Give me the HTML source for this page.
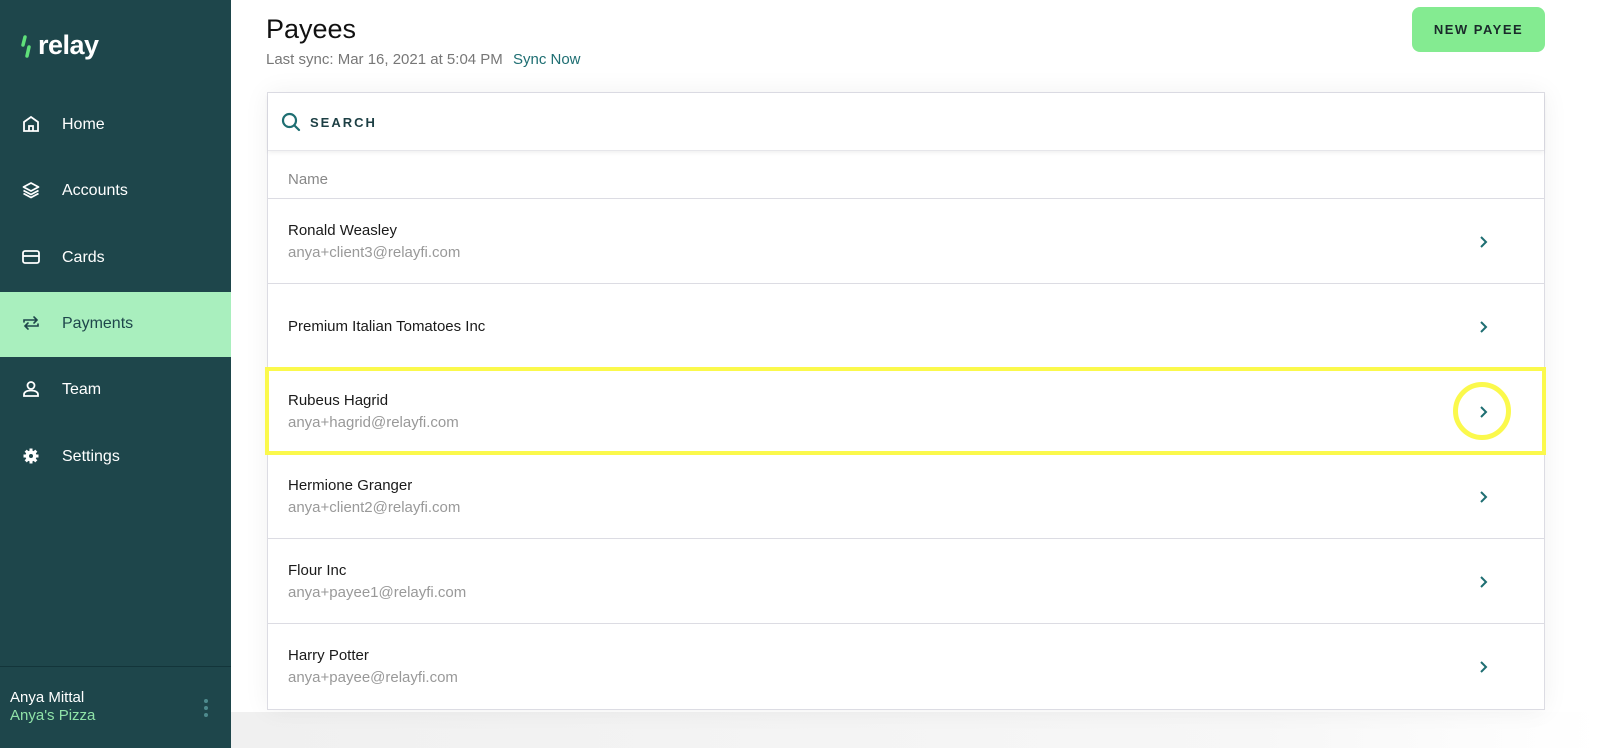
<!DOCTYPE html>
<html><head><meta charset="utf-8"><style>
*{box-sizing:border-box;margin:0;padding:0}
body{width:1600px;height:748px;overflow:hidden;font-family:"Liberation Sans",sans-serif;background:#fff;position:relative}
.sb{position:absolute;left:0;top:0;width:231px;height:748px;background:#1e464b}
.logo{position:absolute;left:20px;top:30px;color:#fff;font-weight:bold;font-size:27px;letter-spacing:-0.5px}
.logo .bolt{position:absolute;left:0;top:5px}
.logo span.t{position:absolute;left:18px;top:0}
.nav{position:absolute;left:0;width:231px;height:65px;color:#fff;font-size:16px}
.nav svg{position:absolute;left:22px;top:22px}
.nav .l{position:absolute;left:62px;top:23px}
.nav.act{background:#a9efbe;color:#1e464b}
.foot{position:absolute;left:0;top:666px;width:231px;border-top:1px solid #13353a;height:82px}
.foot .n{position:absolute;left:10px;top:22px;color:#fff;font-size:15px}
.foot .c{position:absolute;left:10px;top:40px;color:#8fe3a8;font-size:15px}
.dots{position:absolute;left:204px;top:32px}
.dots i{display:block;width:4px;height:4px;border-radius:2px;background:#4e8a8d;margin-bottom:3px}
h1{position:absolute;left:266px;top:14px;font-size:27px;font-weight:normal;color:#111}
.sync{position:absolute;left:266px;top:51px;font-size:15px;color:#777}
.sync a{color:#1e6e72;margin-left:6px}
.btn{position:absolute;left:1412px;top:7px;width:133px;height:45px;background:#84eb91;border-radius:8px;font-size:13px;font-weight:bold;letter-spacing:1.5px;color:#1a2a2a;text-align:center;line-height:45px}
.tbl{position:absolute;left:267px;top:92px;width:1278px;height:618px;border:1px solid #dcdce3;box-shadow:0 0 24px rgba(0,0,0,0.06)}
.search{position:absolute;left:0;top:0;width:1276px;height:58px;border-bottom:1px solid #e6e6ea;box-shadow:0 2px 4px rgba(0,0,0,0.06);background:#fff}
.search svg{position:absolute;left:13px;top:19px}
.search span{position:absolute;left:42px;top:22px;font-size:13px;font-weight:bold;letter-spacing:2px;color:#1d3f44}
.hd{position:absolute;left:0;top:58px;width:1276px;height:48px;border-bottom:1px solid #dcdce3;font-size:15px;color:#888;padding:20px 0 0 20px}
.row{position:absolute;left:0;width:1276px;height:85px;border-bottom:1px solid #dcdce3}
.row .a{position:absolute;left:20px;top:23px;font-size:15px;color:#1a1a1a}
.row .b{position:absolute;left:20px;top:45px;font-size:15px;color:#999}
.row .s{position:absolute;left:20px;top:34px;font-size:15px;color:#1a1a1a}
.row svg{position:absolute;left:1211px;top:36px}
.hl{position:absolute;left:265px;top:367px;width:1281px;height:88px;border:4px solid #fbf94c}
.circ{position:absolute;left:1453px;top:382px;width:58px;height:58px;border:5px solid #fbf94c;border-radius:50%}
.shade{position:absolute;left:231px;top:712px;width:1369px;height:36px;background:linear-gradient(90deg,#f0f0f0,#f7f7f7 75%,#fff)}
</style></head><body>
<div class="sb">
 <div class="logo"><svg class="bolt" width="14" height="24" viewBox="0 0 14 24"><path d="M5 2 L3 10 M9 12 L7 21" stroke="#5fe07a" stroke-width="3.5" fill="none" stroke-linecap="round"/></svg><span class="t">relay</span></div>
 <div class="nav" style="top:93px"><svg width="18" height="18" viewBox="0 0 18 18" fill="none" stroke="#fff" stroke-width="1.8"><path d="M2 16V7l7-5 7 5v9z M7 16v-5h4v5"/></svg><span class="l">Home</span></div>
 <div class="nav" style="top:159px"><svg width="18" height="18" viewBox="0 0 18 18" fill="none" stroke="#fff" stroke-width="1.8" stroke-linejoin="round"><path d="M9 2 1.5 6 9 10 16.5 6z M1.5 9.5 9 13.5 16.5 9.5 M1.5 12.5 9 16.5 16.5 12.5"/></svg><span class="l">Accounts</span></div>
 <div class="nav" style="top:226px"><svg width="18" height="18" viewBox="0 0 18 18" fill="none" stroke="#fff" stroke-width="1.8"><rect x="1" y="3" width="16" height="12" rx="2"/><path d="M1 8h16"/></svg><span class="l">Cards</span></div>
 <div class="nav act" style="top:292px"><svg width="18" height="18" viewBox="0 0 18 18" fill="none" stroke="#1e464b" stroke-width="1.6" stroke-linecap="round"><path d="M2 8V6h13 M12 3l3 3-3 3 M16 10v2H3 M6 15l-3-3 3-3"/></svg><span class="l">Payments</span></div>
 <div class="nav" style="top:358px"><svg width="18" height="18" viewBox="0 0 18 18" fill="none" stroke="#fff" stroke-width="1.8"><circle cx="9" cy="5.5" r="3.5"/><path d="M2 16v-1.5c0-2 2-4 7-4s7 2 7 4V16z"/></svg><span class="l">Team</span></div>
 <div class="nav" style="top:425px"><svg width="18" height="18" viewBox="0 0 18 18"><circle cx="9" cy="9" r="5.5" fill="#fff"/><g stroke="#fff" stroke-width="3"><path d="M9 1.5v15M1.5 9h15M3.7 3.7l10.6 10.6M14.3 3.7 3.7 14.3"/></g><circle cx="9" cy="9" r="2" fill="#1e464b"/></svg><span class="l">Settings</span></div>
 <div class="foot"><div class="n">Anya Mittal</div><div class="c">Anya's Pizza</div><div class="dots"><i></i><i></i><i></i></div></div>
</div>
<h1>Payees</h1>
<div class="sync">Last sync: Mar 16, 2021 at 5:04 PM <a>Sync Now</a></div>
<div class="btn">NEW PAYEE</div>
<div class="shade"></div>
<div class="tbl">
 <div class="search"><svg width="20" height="20" viewBox="0 0 20 20" fill="none" stroke="#1e6e72" stroke-width="2.2"><circle cx="8.5" cy="8.5" r="6.5"/><path d="M13.5 13.5 18 18" stroke-linecap="round"/></svg><span>SEARCH</span></div>
 <div class="hd">Name</div>
 <div class="row" style="top:106px"><div class="a">Ronald Weasley</div><div class="b">anya+client3@relayfi.com</div><svg width="10" height="14" viewBox="0 0 10 14"><path d="M2 2l5 5-5 5" stroke="#1e6e72" stroke-width="2" fill="none"/></svg></div>
 <div class="row" style="top:191px"><div class="s">Premium Italian Tomatoes Inc</div><svg width="10" height="14" viewBox="0 0 10 14"><path d="M2 2l5 5-5 5" stroke="#1e6e72" stroke-width="2" fill="none"/></svg></div>
 <div class="row" style="top:276px"><div class="a">Rubeus Hagrid</div><div class="b">anya+hagrid@relayfi.com</div><svg width="10" height="14" viewBox="0 0 10 14"><path d="M2 2l5 5-5 5" stroke="#1e6e72" stroke-width="2" fill="none"/></svg></div>
 <div class="row" style="top:361px"><div class="a">Hermione Granger</div><div class="b">anya+client2@relayfi.com</div><svg width="10" height="14" viewBox="0 0 10 14"><path d="M2 2l5 5-5 5" stroke="#1e6e72" stroke-width="2" fill="none"/></svg></div>
 <div class="row" style="top:446px"><div class="a">Flour Inc</div><div class="b">anya+payee1@relayfi.com</div><svg width="10" height="14" viewBox="0 0 10 14"><path d="M2 2l5 5-5 5" stroke="#1e6e72" stroke-width="2" fill="none"/></svg></div>
 <div class="row" style="top:531px;border-bottom:none"><div class="a">Harry Potter</div><div class="b">anya+payee@relayfi.com</div><svg width="10" height="14" viewBox="0 0 10 14"><path d="M2 2l5 5-5 5" stroke="#1e6e72" stroke-width="2" fill="none"/></svg></div>
</div>
<div class="hl"></div>
<div class="circ"></div>
</body></html>
